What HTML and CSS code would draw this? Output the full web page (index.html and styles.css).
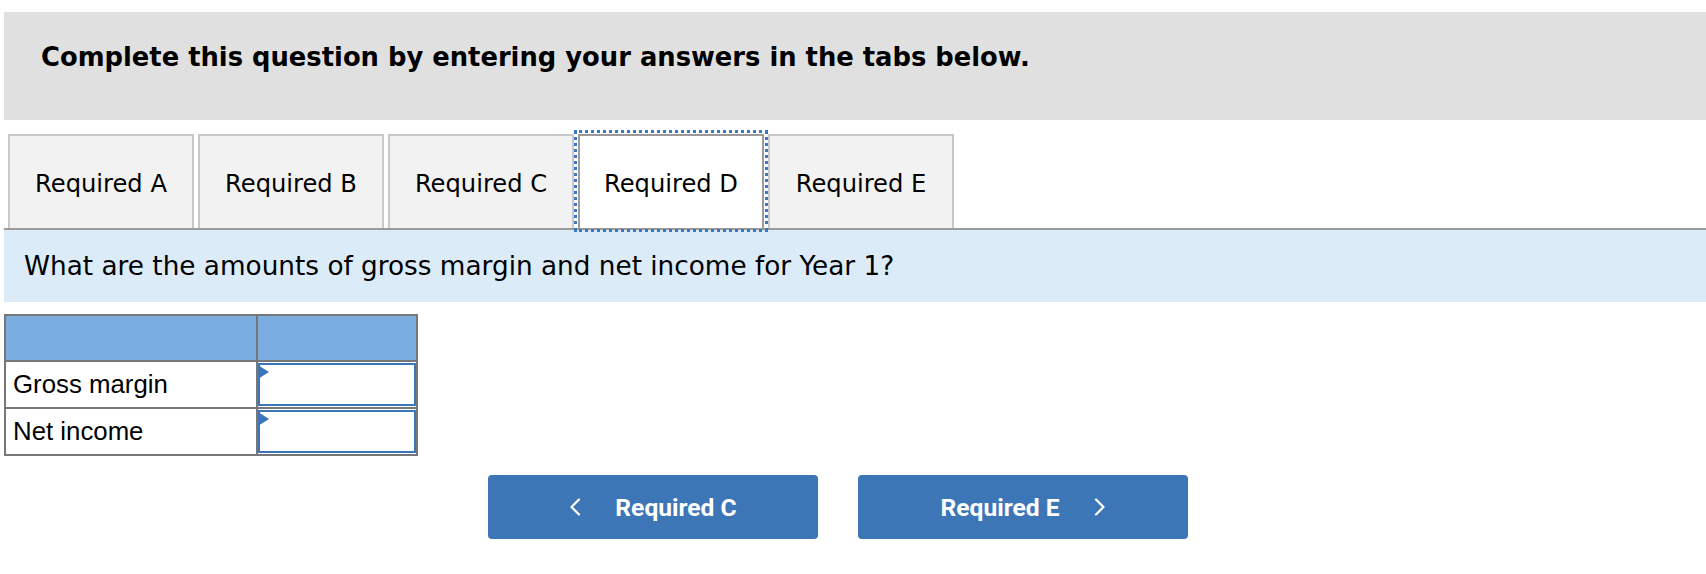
FILE: index.html
```html
<!DOCTYPE html>
<html lang="en">
<head>
<meta charset="utf-8">
<title>Required D</title>
<link rel="stylesheet" href="styles.css">
</head>
<body>
<div class="page">
  <div class="banner">Complete this question by entering your answers in the tabs below.</div>

  <div class="tabs">
    <div class="tab">Required A</div>
    <div class="tab">Required B</div>
    <div class="tab">Required C</div>
    <div class="tab tab-active">Required D</div>
    <div class="tab">Required E</div>
  </div>

  <div class="question">What are the amounts of gross margin and net income for Year 1?</div>

  <table class="grid">
    <tr class="head"><th class="c-label"></th><th class="c-input"></th></tr>
    <tr>
      <td class="c-label">Gross margin</td>
      <td class="c-input"><div class="field"><span class="flag"></span></div></td>
    </tr>
    <tr>
      <td class="c-label">Net income</td>
      <td class="c-input"><div class="field"><span class="flag"></span></div></td>
    </tr>
  </table>

  <div class="nav">
    <button class="btn" type="button">
      <svg class="chev" width="12" height="18" viewBox="0 0 12 18"><polyline points="10,1.5 2.5,9 10,16.5" fill="none" stroke="#fff" stroke-width="2.2" stroke-linecap="round" stroke-linejoin="round"/></svg>
      <span>Required C</span>
    </button>
    <button class="btn" type="button">
      <span>Required E</span>
      <svg class="chev" width="12" height="18" viewBox="0 0 12 18"><polyline points="2,1.5 9.5,9 2,16.5" fill="none" stroke="#fff" stroke-width="2.2" stroke-linecap="round" stroke-linejoin="round"/></svg>
    </button>
  </div>
</div>
</body>
</html>
```

FILE: styles.css
```css
html, body {
  margin: 0;
  padding: 0;
  background: #ffffff;
}

.page {
  padding: 12px 0 0 4px;
  font-family: "DejaVu Sans", Verdana, sans-serif;
  color: #000;
}

.banner {
  height: 108px;
  box-sizing: border-box;
  background: #e0e0e0;
  padding: 29px 0 0 37px;
  font-weight: bold;
  font-size: 25.8px;
  line-height: 32px;
}

.tabs {
  display: flex;
  gap: 4px;
  margin-top: 14px;
  padding-left: 4px;
  border-bottom: 2px solid #9b9b9b;
}

.tab {
  width: 186px;
  height: 94px;
  box-sizing: border-box;
  border: 2px solid #c8c8c8;
  border-bottom: none;
  background: #f2f2f2;
  display: flex;
  align-items: center;
  justify-content: center;
  padding-top: 3px;
  font-size: 24.2px;
}

.tab-active {
  background: #ffffff;
  border-color: #9b9b9b;
  outline: 3px dotted #3b78c4;
  outline-offset: 1px;
  position: relative;
  z-index: 1;
}

.question {
  height: 72px;
  box-sizing: border-box;
  background: #dbebf7;
  padding-left: 20px;
  display: flex;
  align-items: center;
  font-size: 26.3px;
}

.grid {
  margin-top: 12px;
  border-collapse: collapse;
  font-family: "Liberation Sans", Arial, sans-serif;
  font-size: 25.8px;
}

.grid th, .grid td {
  border: 2px solid #777777;
  padding: 0;
}

.grid .head th {
  background: #7aade0;
  height: 44px;
}

.grid td {
  height: 45px;
}

.c-label {
  width: 252px;
  padding-left: 7px !important;
  text-align: left;
  box-sizing: border-box;
}

.c-input {
  width: 158px;
}

.field {
  position: relative;
  height: 43px;
  box-sizing: border-box;
  border: 2px solid #3c75b8;
}

.flag {
  position: absolute;
  left: -2px;
  top: 0;
  width: 0;
  height: 0;
  border-top: 7px solid transparent;
  border-bottom: 7px solid transparent;
  border-left: 11px solid #3c75b8;
}

.nav {
  display: flex;
  gap: 40px;
  margin-top: 19px;
  padding-left: 484px;
}

.btn {
  width: 330px;
  height: 64px;
  border: none;
  border-radius: 4px;
  background: #3d76b7;
  color: #ffffff;
  display: flex;
  align-items: center;
  justify-content: center;
  gap: 34px;
  font-family: Roboto, "Liberation Sans", sans-serif;
  font-weight: bold;
  font-size: 24.6px;
  padding: 0;
}

.chev {
  display: block;
}
```
